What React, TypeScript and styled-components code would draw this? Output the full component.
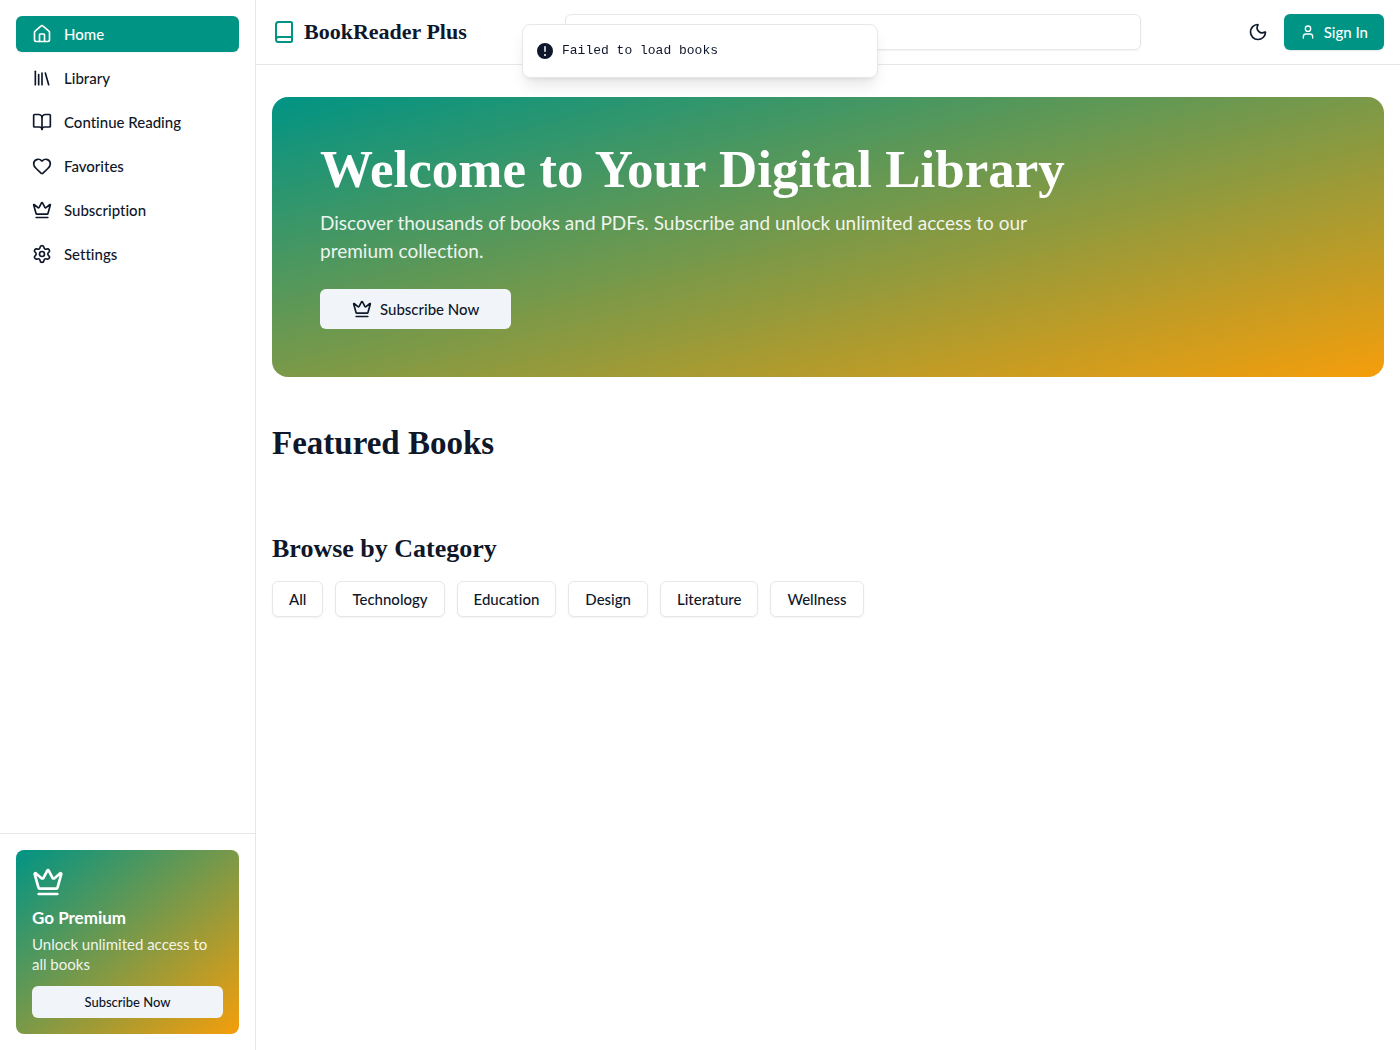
import React from 'react';
import styled, { createGlobalStyle, css } from 'styled-components';
import { Book, BookOpen, Crown, Heart, House, Library, Moon, Settings, User } from 'lucide-react';

const color = {
  ink: '#0f172a',
  primary: '#009485',
  accent: '#f59e0b',
  border: '#e5e7eb',
  soft: '#f1f5f9',
  page: '#ffffff',
};

const gradient = `linear-gradient(to bottom right, ${color.primary}, ${color.accent})`;
const sans = 'Lato, "Liberation Sans", sans-serif';
const serif = '"Liberation Serif", serif';

const GlobalStyle = createGlobalStyle`
  *, *::before, *::after { box-sizing: border-box; }
  body {
    margin: 0;
    background: ${color.page};
    color: ${color.ink};
    font-family: ${sans};
    font-size: 15px;
    line-height: 20px;
    font-variant-ligatures: none;
  }
  h1, h2, h3, p, ul { margin: 0; padding: 0; }
  button, input { font: inherit; color: inherit; font-variant-ligatures: none; }
  svg { flex-shrink: 0; display: block; }
`;

const Shell = styled.div`
  display: flex;
  min-height: 100vh;
`;

const Sidebar = styled.aside`
  display: flex;
  flex-direction: column;
  flex: 0 0 256px;
  border-right: 1px solid ${color.border};
`;

const Nav = styled.nav`
  flex: 1;
  padding: 16px;
`;

const NavList = styled.ul`
  display: flex;
  flex-direction: column;
  gap: 8px;
  list-style: none;
`;

const NavLink = styled.a<{ $active?: boolean }>`
  display: flex;
  align-items: center;
  gap: 12px;
  height: 36px;
  padding: 0 16px;
  border-radius: 6px;
  font-weight: 500;
  color: inherit;
  text-decoration: none;
  ${({ $active }) =>
    $active &&
    css`
      background: ${color.primary};
      color: ${color.page};
      box-shadow: 0 1px 2px rgba(0, 0, 0, 0.05);
    `}
`;

const SidebarFooter = styled.div`
  padding: 16px;
  border-top: 1px solid ${color.border};
`;

const PremiumCard = styled.section`
  display: flex;
  flex-direction: column;
  padding: 16px;
  border-radius: 8px;
  background: ${gradient};
  color: ${color.page};
`;

const PremiumTitle = styled.h3`
  margin-top: 8px;
  font-size: 17px;
  font-weight: 700;
  line-height: 24px;
`;

const PremiumText = styled.p`
  margin: 4px 0 12px;
  opacity: 0.9;
`;

const Button = styled.button<{ $tone?: 'primary' | 'soft' | 'outline' | 'ghost'; $size?: 'sm' | 'md' | 'lg' | 'icon' }>`
  display: inline-flex;
  align-items: center;
  justify-content: center;
  gap: 8px;
  height: 36px;
  padding: 0 16px;
  border: 0;
  border-radius: 6px;
  font-weight: 500;
  white-space: nowrap;
  cursor: pointer;

  ${({ $tone = 'soft' }) =>
    ({
      primary: css`
        background: ${color.primary};
        color: ${color.page};
        box-shadow: 0 1px 2px rgba(0, 0, 0, 0.1);
      `,
      soft: css`
        background: ${color.soft};
        color: ${color.ink};
      `,
      outline: css`
        background: ${color.page};
        border: 1px solid ${color.border};
        box-shadow: 0 1px 2px rgba(0, 0, 0, 0.05);
      `,
      ghost: css`
        background: transparent;
      `,
    })[$tone]}

  ${({ $size = 'md' }) =>
    ({
      sm: css`
        height: 32px;
        font-size: 13px;
      `,
      md: '',
      lg: css`
        height: 40px;
        padding: 0 32px;
      `,
      icon: css`
        width: 36px;
        padding: 0;
      `,
    })[$size]}
`;

const Content = styled.div`
  display: flex;
  flex-direction: column;
  flex: 1;
  min-width: 0;
`;

const Header = styled.header`
  display: flex;
  align-items: center;
  justify-content: space-between;
  gap: 16px;
  height: 65px;
  padding: 0 16px;
  border-bottom: 1px solid ${color.border};
`;

const Brand = styled.a`
  display: flex;
  align-items: center;
  gap: 8px;
  color: inherit;
  text-decoration: none;
  white-space: nowrap;

  svg { color: ${color.primary}; }
`;

const BrandName = styled.span`
  font-family: ${serif};
  font-size: 22px;
  font-weight: 700;
  line-height: 28px;
`;

const SearchInput = styled.input`
  flex: 1;
  min-width: 0;
  max-width: 576px;
  height: 36px;
  padding: 4px 12px;
  border: 1px solid ${color.border};
  border-radius: 6px;
  background: transparent;
  box-shadow: 0 1px 2px rgba(0, 0, 0, 0.05);
`;

const Actions = styled.div`
  display: flex;
  align-items: center;
  gap: 8px;
`;

const Main = styled.main`
  display: flex;
  flex-direction: column;
  gap: 48px;
  padding: 32px 16px;
`;

const Hero = styled.section`
  padding: 48px;
  border-radius: 16px;
  background: ${gradient};
  color: ${color.page};
`;

const HeroBody = styled.div`
  display: flex;
  flex-direction: column;
  align-items: flex-start;
  max-width: 768px;
`;

const HeroTitle = styled.h1`
  font-family: ${serif};
  font-size: 53px;
  font-weight: 700;
  line-height: 48px;
`;

const HeroText = styled.p`
  margin: 16px 0 24px;
  font-size: 19px;
  line-height: 28px;
  opacity: 0.9;
`;

const FeaturedTitle = styled.h2`
  margin-bottom: 24px;
  font-family: ${serif};
  font-size: 33px;
  font-weight: 700;
  line-height: 36px;
`;

const CategoryTitle = styled.h2`
  margin-bottom: 16px;
  font-family: ${serif};
  font-size: 26px;
  font-weight: 700;
  line-height: 32px;
`;

const CategoryRow = styled.div`
  display: flex;
  flex-wrap: wrap;
  gap: 12px;
`;

const ToastRegion = styled.div`
  position: fixed;
  inset: 24px 0 auto;
  display: flex;
  justify-content: center;
  pointer-events: none;
`;

const Toast = styled.div`
  display: flex;
  align-items: center;
  gap: 7px;
  width: 356px;
  padding: 16px 12px;
  border: 1px solid ${color.border};
  border-radius: 8px;
  background: ${color.page};
  box-shadow: 0 10px 15px -3px rgba(0, 0, 0, 0.1), 0 4px 6px -4px rgba(0, 0, 0, 0.1);
  font-family: "Liberation Mono", monospace;
  font-size: 13px;
`;

const AlertIcon = () => (
  <svg width="20" height="20" viewBox="0 0 20 20" fill="currentColor" aria-hidden="true">
    <path
      fillRule="evenodd"
      clipRule="evenodd"
      d="M18 10a8 8 0 11-16 0 8 8 0 0116 0zm-8-5a.75.75 0 01.75.75v4.5a.75.75 0 01-1.5 0v-4.5A.75.75 0 0110 5zm0 10a1 1 0 100-2 1 1 0 000 2z"
    />
  </svg>
);

const navItems = [
  { label: 'Home', icon: House, active: true },
  { label: 'Library', icon: Library },
  { label: 'Continue Reading', icon: BookOpen },
  { label: 'Favorites', icon: Heart },
  { label: 'Subscription', icon: Crown },
  { label: 'Settings', icon: Settings },
];

const categories = ['All', 'Technology', 'Education', 'Design', 'Literature', 'Wellness'];

export default function App() {
  return (
    <>
      <GlobalStyle />
      <Shell>
        <Sidebar>
          <Nav>
            <NavList>
              {navItems.map(({ label, icon: Icon, active }) => (
                <li key={label}>
                  <NavLink href="#" $active={active} aria-current={active ? 'page' : undefined}>
                    <Icon size={20} />
                    {label}
                  </NavLink>
                </li>
              ))}
            </NavList>
          </Nav>
          <SidebarFooter>
            <PremiumCard>
              <Crown size={32} />
              <PremiumTitle>Go Premium</PremiumTitle>
              <PremiumText>Unlock unlimited access to all books</PremiumText>
              <Button type="button" $size="sm">Subscribe Now</Button>
            </PremiumCard>
          </SidebarFooter>
        </Sidebar>

        <Content>
          <Header>
            <Brand href="#">
              <Book size={24} />
              <BrandName>BookReader Plus</BrandName>
            </Brand>
            <SearchInput type="search" aria-label="Search books" />
            <Actions>
              <Button type="button" $tone="ghost" $size="icon" aria-label="Toggle theme">
                <Moon size={20} />
              </Button>
              <Button type="button" $tone="primary">
                <User size={16} />
                Sign In
              </Button>
            </Actions>
          </Header>

          <Main>
            <Hero>
              <HeroBody>
                <HeroTitle>Welcome to Your Digital Library</HeroTitle>
                <HeroText>
                  Discover thousands of books and PDFs. Subscribe and unlock unlimited access to our premium
                  collection.
                </HeroText>
                <Button type="button" $size="lg">
                  <Crown size={20} />
                  Subscribe Now
                </Button>
              </HeroBody>
            </Hero>

            <section>
              <FeaturedTitle>Featured Books</FeaturedTitle>
            </section>

            <section>
              <CategoryTitle>Browse by Category</CategoryTitle>
              <CategoryRow>
                {categories.map((name) => (
                  <Button key={name} type="button" $tone="outline">
                    {name}
                  </Button>
                ))}
              </CategoryRow>
            </section>
          </Main>
        </Content>
      </Shell>

      <ToastRegion>
        <Toast role="status">
          <AlertIcon />
          Failed to load books
        </Toast>
      </ToastRegion>
    </>
  );
}
